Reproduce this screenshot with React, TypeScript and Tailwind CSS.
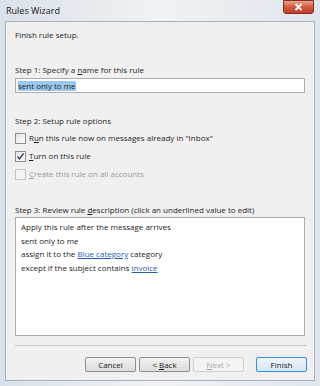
import React from "react";

const font = { fontFamily: '"Open Sans", "Noto Sans", sans-serif' };

function Check({ checked, disabled }: { checked?: boolean; disabled?: boolean }) {
  return (
    <div
      className={`w-[11px] h-[11px] border ${disabled ? "border-[#c4c4c4] bg-[#f4f4f4]" : "border-[#8f8f8f] bg-gradient-to-br from-[#e4e4e4] to-[#fcfcfc]"} flex items-center justify-center shrink-0`}
    >
      {checked && (
        <svg width="9" height="9" viewBox="0 0 9 9">
          <path d="M1.5 4.5 L3.5 7 L7.5 1.5" fill="none" stroke="#2a3a66" strokeWidth="1.3" />
        </svg>
      )}
    </div>
  );
}

function Btn({ children, primary, disabled }: { children: React.ReactNode; primary?: boolean; disabled?: boolean }) {
  return (
    <div
      className={`w-[51px] h-[15px] flex items-center justify-center text-[8px] rounded-[2px] border ${
        disabled
          ? "border-[#cfcfcf] bg-[#f4f4f4] text-[#a8a8a8]"
          : primary
          ? "border-[#3c8fd6] bg-gradient-to-b from-[#eef5fb] to-[#d6e6f4] text-[#1a1a1a]"
          : "border-[#8e8e8e] bg-gradient-to-b from-[#f2f2f2] to-[#dcdcdc] text-[#1a1a1a]"
      }`}
    >
      <span>{children}</span>
    </div>
  );
}

export default function App() {
  return (
    <div
      className="w-[320px] h-[386px] flex flex-col bg-gradient-to-r from-[#d9e1ea] via-[#f1f3f5] to-[#dfe6ee] overflow-hidden relative text-[#1e1e1e]"
      style={font}
    >
      <div className="h-[21px] flex items-start shrink-0 relative">
        <div className="text-[9px] pl-[6px] pt-[4px] text-[#202020]">Rules Wizard</div>
        <div className="absolute right-[6px] top-0 w-[31px] h-[14px] rounded-b-[3px] border border-[#8a2a1a] bg-gradient-to-b from-[#e9a48f] via-[#d05a3c] to-[#c0412a] flex items-center justify-center">
          <svg width="9" height="8" viewBox="0 0 9 8">
            <path d="M1.5 1 L7.5 7 M7.5 1 L1.5 7" stroke="#ffffff" strokeWidth="1.8" />
          </svg>
        </div>
      </div>
      <div className="mx-[5px] mb-[5px] flex-1 border border-[#a9b0b8] bg-[#f0f0f0] flex flex-col px-[9px] text-[8px]">
        <div className="pt-[7px] h-[42px]">Finish rule setup.</div>
        <div className="mt-0">
          Step 1: Specify a <span className="underline">n</span>ame for this rule
        </div>
        <div className="mt-[2px] h-[15px] border border-[#abadb3] bg-white flex items-center px-[2px]">
          <span className="bg-[#99c9ef] leading-[10px]">sent only to me</span>
        </div>
        <div className="mt-[22px]">Step 2: Setup rule options</div>
        <div className="mt-[5px] flex items-center gap-[3px]">
          <Check />
          <span>
            R<span className="underline">u</span>n this rule now on messages already in "Inbox"
          </span>
        </div>
        <div className="mt-[6px] flex items-center gap-[3px]">
          <Check checked />
          <span>
            <span className="underline">T</span>urn on this rule
          </span>
        </div>
        <div className="mt-[6px] flex items-center gap-[3px] text-[#9a9a9a]">
          <Check disabled />
          <span>
            <span className="underline">C</span>reate this rule on all accounts
          </span>
        </div>
        <div className="mt-[24px]">
          Step 3: Review rule <span className="underline">d</span>escription (click an underlined value to edit)
        </div>
        <div className="mt-[1px] h-[119px] border border-[#abadb3] bg-white px-[5px] pt-[2px] leading-[13.5px]">
          <div>Apply this rule after the message arrives</div>
          <div>sent only to me</div>
          <div>
            assign it to the <span className="underline text-[#2a5db0]">Blue category</span> category
          </div>
          <div>
            except if the subject contains <span className="underline text-[#2a5db0]">invoice</span>
          </div>
        </div>
        <div className="mt-[9px] h-px bg-[#c8c8c8] mr-[-2px]"></div>
        <div className="mt-[11px] flex justify-end gap-[3px] mr-[-2px]">
          <Btn>Cancel</Btn>
          <Btn>
            &lt; <span className="underline">B</span>ack
          </Btn>
          <Btn disabled>
            <span className="underline">N</span>ext &gt;
          </Btn>
          <div className="w-[6px]" />
          <Btn primary>Finish</Btn>
        </div>
      </div>
    </div>
  );
}
